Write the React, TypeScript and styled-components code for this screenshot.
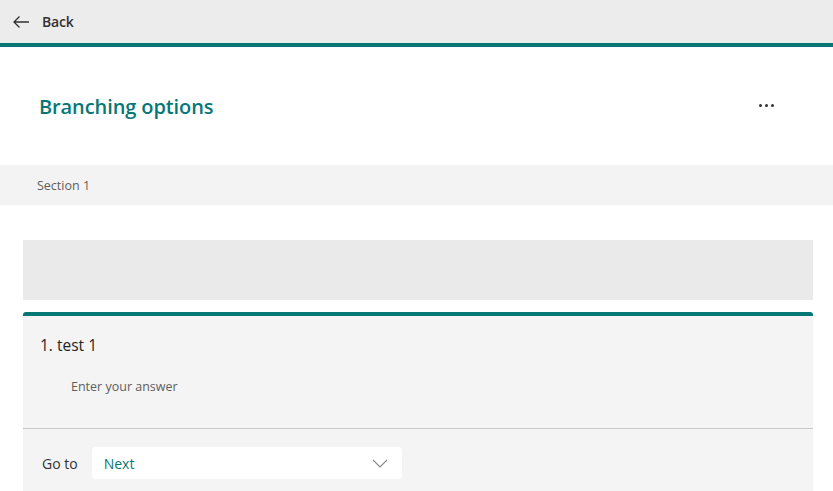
import React from "react";
import styled, { createGlobalStyle } from "styled-components";

const Global = createGlobalStyle`
  html, body { margin: 0; padding: 0; background: #ffffff; }
  body { font-family: "Open Sans", "Noto Sans", Arial, sans-serif; color: #323130; }
  * { box-sizing: border-box; }
`;

const Page = styled.div`
  width: 833px;
  height: 491px;
  overflow: hidden;
  display: flex;
  flex-direction: column;
  background: #ffffff;
`;

const TopBar = styled.div`
  height: 47px;
  flex: none;
  background: #ececec;
  border-bottom: 4px solid #077776;
  display: flex;
  align-items: center;
  padding: 0 0 0 12px;
  gap: 12px;
`;

const BackText = styled.span`
  font-size: 14px;
  font-weight: 600;
  color: #323130;
  letter-spacing: -0.2px;
`;

const TitleRow = styled.div`
  height: 118px;
  flex: none;
  display: flex;
  align-items: center;
  justify-content: space-between;
  padding: 0 59px 0 39px;
`;

const Title = styled.h1`
  margin: 0;
  font-size: 20px;
  font-weight: 600;
  color: #077776;
  letter-spacing: -0.1px;
`;

const MoreButton = styled.div`
  display: flex;
  gap: 3px;
  transform: translateY(-1px);
`;

const Dot = styled.span`
  width: 3px;
  height: 3px;
  border-radius: 50%;
  background: #323130;
`;

const SectionBand = styled.div`
  height: 40px;
  flex: none;
  background: #f3f3f3;
  display: flex;
  align-items: center;
  padding-left: 37px;
  font-size: 12.5px;
  color: #605e5c;
`;

const Content = styled.div`
  padding: 35px 20px 0 23px;
  display: flex;
  flex-direction: column;
  gap: 12px;
`;

const Banner = styled.div`
  height: 60px;
  background: #eaeaea;
`;

const Card = styled.div`
  background: #f4f4f4;
  border-top: 4px solid #077776;
  border-radius: 3px 3px 0 0;
  display: flex;
  flex-direction: column;
`;

const QuestionBody = styled.div`
  padding: 18px 17px 0;
  height: 113px;
  border-bottom: 1px solid #c8c8c8;
`;

const QuestionTitle = styled.div`
  font-size: 15.5px;
  color: #252423;
  line-height: 22px;
`;

const AnswerHint = styled.div`
  margin: 22px 0 0 31px;
  font-size: 12.5px;
  color: #605e5c;
`;

const GotoRow = styled.div`
  display: flex;
  align-items: center;
  gap: 14px;
  padding: 18px 0 12px 19px;
`;

const GotoLabel = styled.span`
  font-size: 14px;
  color: #323130;
`;

const Select = styled.div`
  width: 310px;
  height: 32px;
  background: #ffffff;
  border-radius: 4px;
  display: flex;
  align-items: center;
  justify-content: space-between;
  padding: 0 14px 0 12px;
`;

const SelectValue = styled.span`
  font-size: 14px;
  color: #077776;
`;

export default function App() {
  return (
    <>
      <Global />
      <Page>
        <TopBar>
          <svg width="18" height="14" viewBox="0 0 18 14" fill="none">
            <path d="M17 7H2M7.5 1.5L2 7l5.5 5.5" stroke="#323130" strokeWidth="1.3" />
          </svg>
          <BackText>Back</BackText>
        </TopBar>
        <TitleRow>
          <Title>Branching options</Title>
          <MoreButton>
            <Dot />
            <Dot />
            <Dot />
          </MoreButton>
        </TitleRow>
        <SectionBand>Section 1</SectionBand>
        <Content>
          <Banner />
          <Card>
            <QuestionBody>
              <QuestionTitle>1. test 1</QuestionTitle>
              <AnswerHint>Enter your answer</AnswerHint>
            </QuestionBody>
            <GotoRow>
              <GotoLabel>Go to</GotoLabel>
              <Select>
                <SelectValue>Next</SelectValue>
                <svg width="16" height="9" viewBox="0 0 16 9" fill="none">
                  <path d="M1 1l7 7 7-7" stroke="#8a8886" strokeWidth="1.1" />
                </svg>
              </Select>
            </GotoRow>
          </Card>
        </Content>
      </Page>
    </>
  );
}
